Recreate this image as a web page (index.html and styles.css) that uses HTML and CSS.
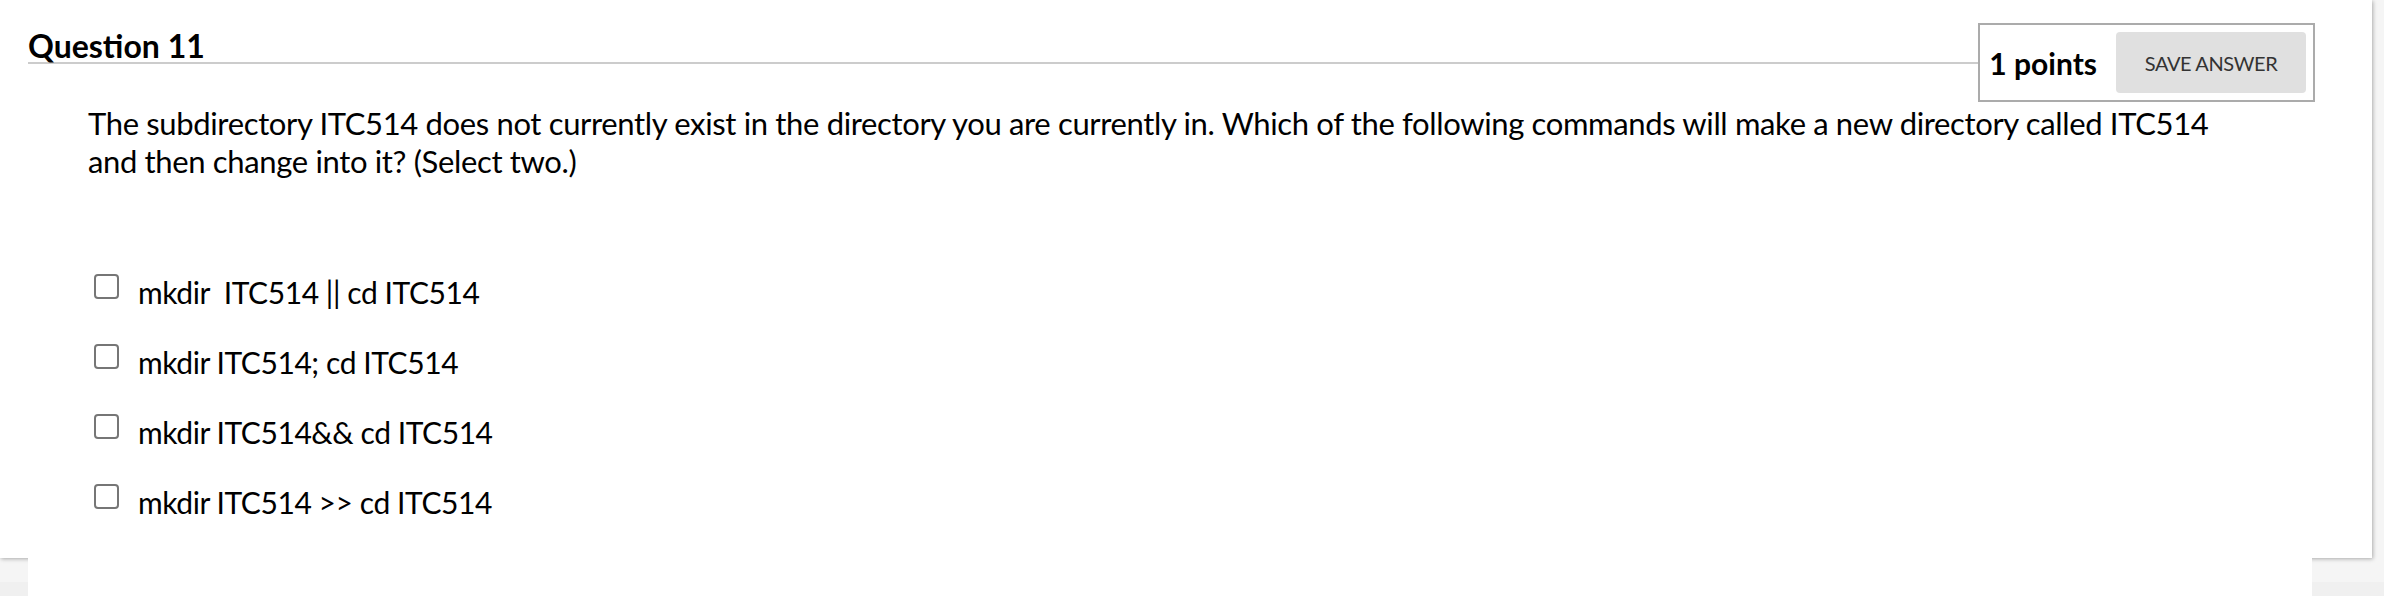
FILE: index.html
```html
<!DOCTYPE html>
<html lang="en">
<head>
<meta charset="utf-8">
<title>Question 11</title>
<link rel="stylesheet" href="styles.css">
</head>
<body>
<div class="card">
  <div class="q-header">
    <h2 class="q-title">Question 11</h2>
    <div class="points-box">
      <span class="points">1 points</span>
      <button class="save-btn" type="button">SAVE ANSWER</button>
    </div>
  </div>
  <div class="q-body">
    <p class="q-text">The subdirectory ITC514 does not currently exist in the directory you are currently in. Which of the following commands will make a new directory called ITC514 and then change into it? (Select two.)</p>
    <ul class="options">
      <li class="option"><input class="checkbox" type="checkbox"><span class="opt-text">mkdir&nbsp; ITC514 || cd ITC514</span></li>
      <li class="option"><input class="checkbox" type="checkbox"><span class="opt-text">mkdir ITC514; cd ITC514</span></li>
      <li class="option"><input class="checkbox" type="checkbox"><span class="opt-text">mkdir ITC514&amp;&amp; cd ITC514</span></li>
      <li class="option"><input class="checkbox" type="checkbox"><span class="opt-text">mkdir ITC514 &gt;&gt; cd ITC514</span></li>
    </ul>
  </div>
</div>
<div class="card-next"></div>
</body>
</html>
```
FILE: styles.css
```css
html, body {
  margin: 0;
  padding: 0;
}
body {
  width: 2384px;
  height: 596px;
  overflow: hidden;
  background: linear-gradient(#f5f5f5 0, #f5f5f5 582px, #f0f0f0 582px);
  font-family: Lato, "Source Sans Pro", "Open Sans", sans-serif;
  color: #000;
}
.card {
  width: 2372px;
  height: 558px;
  box-sizing: border-box;
  padding-top: 23px;
  background: #fff;
  box-shadow: 1px 1px 4px rgba(0, 0, 0, 0.3);
}
.q-header {
  display: flex;
  align-items: flex-start;
  padding-left: 28px;
  padding-right: 57px;
}
.q-title {
  flex: 1;
  margin: 0;
  box-sizing: content-box;
  height: 36px;
  padding-top: 3px;
  font-size: 32px;
  font-weight: 700;
  line-height: 39px;
  border-bottom: 2px solid #cccccc;
  color: #000;
}
.points-box {
  display: flex;
  align-items: center;
  gap: 19px;
  height: 75px;
  padding: 0 7px 0 9px;
  border: 2px solid #ababab;
}
.points {
  font-size: 30px;
  font-weight: 700;
  color: #000;
}
.save-btn {
  width: 190px;
  height: 61px;
  border: none;
  border-radius: 4px;
  background: #e0e0e0;
  color: #333;
  font-family: inherit;
  font-size: 20px;
  letter-spacing: -0.4px;
  padding: 0;
}
.q-body {
  padding-left: 88px;
  padding-right: 112px;
}
.q-text {
  margin: 2px 0 0;
  font-size: 31px;
  letter-spacing: -0.35px;
  line-height: 38px;
  color: #000;
}
.options {
  list-style: none;
  margin: 93px 0 0 6px;
  padding: 0;
}
.option {
  display: flex;
  align-items: flex-start;
  gap: 19px;
  margin-bottom: 32px;
  font-size: 30px;
  letter-spacing: -0.43px;
  line-height: 38px;
}
.checkbox {
  appearance: none;
  -webkit-appearance: none;
  flex-shrink: 0;
  width: 25px;
  height: 25px;
  margin: 1px 0 0;
  box-sizing: border-box;
  border: 2px solid #767676;
  border-radius: 4px;
  background: #fff;
}
.card-next {
  width: 2284px;
  height: 38px;
  margin-left: 28px;
  background: #fff;
}
```
